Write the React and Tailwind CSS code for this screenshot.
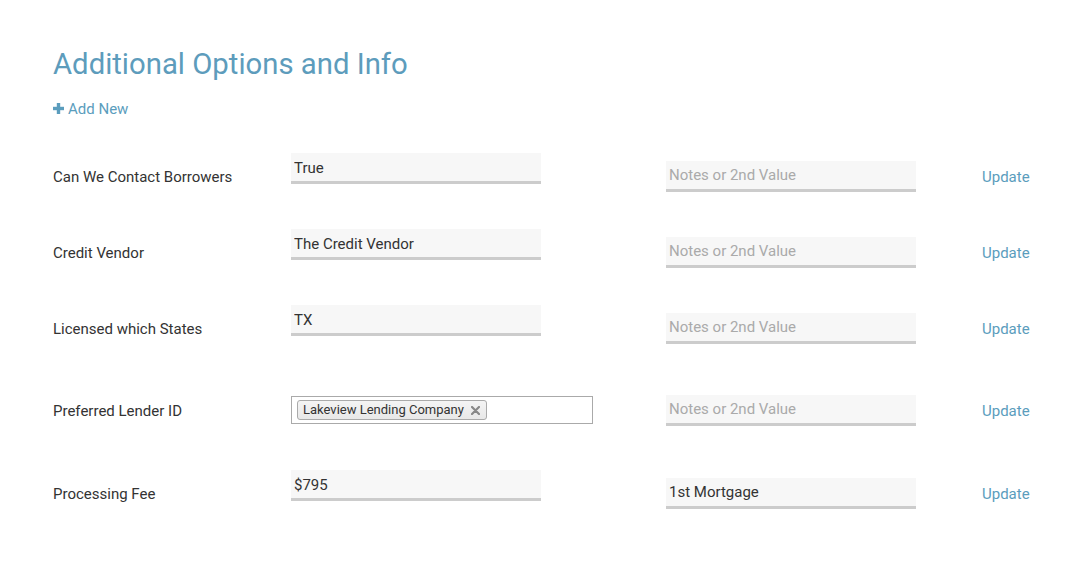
import React from "react";

const font = { fontFamily: "Roboto, 'Noto Sans', sans-serif" };

function TextInput({ value, placeholder, className = "" }) {
  return (
    <input
      readOnly
      defaultValue={value}
      placeholder={placeholder}
      className={
        "block w-[250px] h-[31px] bg-[#f7f7f7] border-0 border-b-[3px] border-[#cccccc] px-[3px] text-[15px] text-[#333333] placeholder:text-[#aaaaaa] outline-none " +
        className
      }
      style={font}
    />
  );
}

function Row({ label, height, children, notesValue }) {
  return (
    <div className={"grid grid-cols-[238px_375px_316px_auto] items-center " + height}>
      <div className="pt-[1px] text-[15px] text-[#333333]">{label}</div>
      <div>{children}</div>
      <div>
        <TextInput value={notesValue} placeholder="Notes or 2nd Value" className="mb-[2px] pt-[1px]" />
      </div>
      <div className="pt-[1px] text-[15px] text-[#5b9dbd] cursor-pointer">Update</div>
    </div>
  );
}

export default function App() {
  return (
    <div className="min-h-[567px] bg-white pl-[53px]" style={font}>
      <h1 className="pt-[46px] text-[29.3px] leading-[36px] text-[#5d9cbc] font-normal">
        Additional Options and Info
      </h1>
      <div className="mt-[17px] flex items-center gap-[4px] text-[15px] leading-[20px] text-[#5b9dbd]">
        <svg width="11" height="11" viewBox="0 0 11 11" className="mt-[-1px]">
          <rect x="3.8" y="0" width="3.4" height="11" fill="#5b9dbd" />
          <rect x="0" y="3.8" width="11" height="3.4" fill="#5b9dbd" />
        </svg>
        <span>Add New</span>
      </div>
      <div className="mt-[20px]">
        <Row label="Can We Contact Borrowers" height="h-[76px]">
          <TextInput value="True" className="mb-[18px] pt-[2px]" />
        </Row>
        <Row label="Credit Vendor" height="h-[76px]">
          <TextInput value="The Credit Vendor" className="mb-[18px] pt-[2px]" />
        </Row>
        <Row label="Licensed which States" height="h-[76px]">
          <TextInput value="TX" className="mb-[18px] pt-[2px]" />
        </Row>
        <Row label="Preferred Lender ID" height="h-[88px]">
          <div className="w-[302px] h-[28px] mb-[2px] border border-[#aaaaaa] bg-white flex items-center px-[5px]">
            <div className="flex items-center h-[20px] rounded-[3px] border border-[#aaaaaa] bg-gradient-to-b from-[#f4f4f4] to-[#e8e8e8] pl-[5px] pr-[6px] gap-[7px] text-[13px] text-[#333333]">
              <span>Lakeview Lending Company</span>
              <svg width="9" height="9" viewBox="0 0 9 9">
                <path d="M1 1 L8 8 M8 1 L1 8" stroke="#888888" strokeWidth="2.2" strokeLinecap="round" />
              </svg>
            </div>
          </div>
        </Row>
        <Row label="Processing Fee" height="h-[78px]" notesValue="1st Mortgage">
          <TextInput value="$795" className="mb-[17px] pt-[2px]" />
        </Row>
      </div>
    </div>
  );
}
